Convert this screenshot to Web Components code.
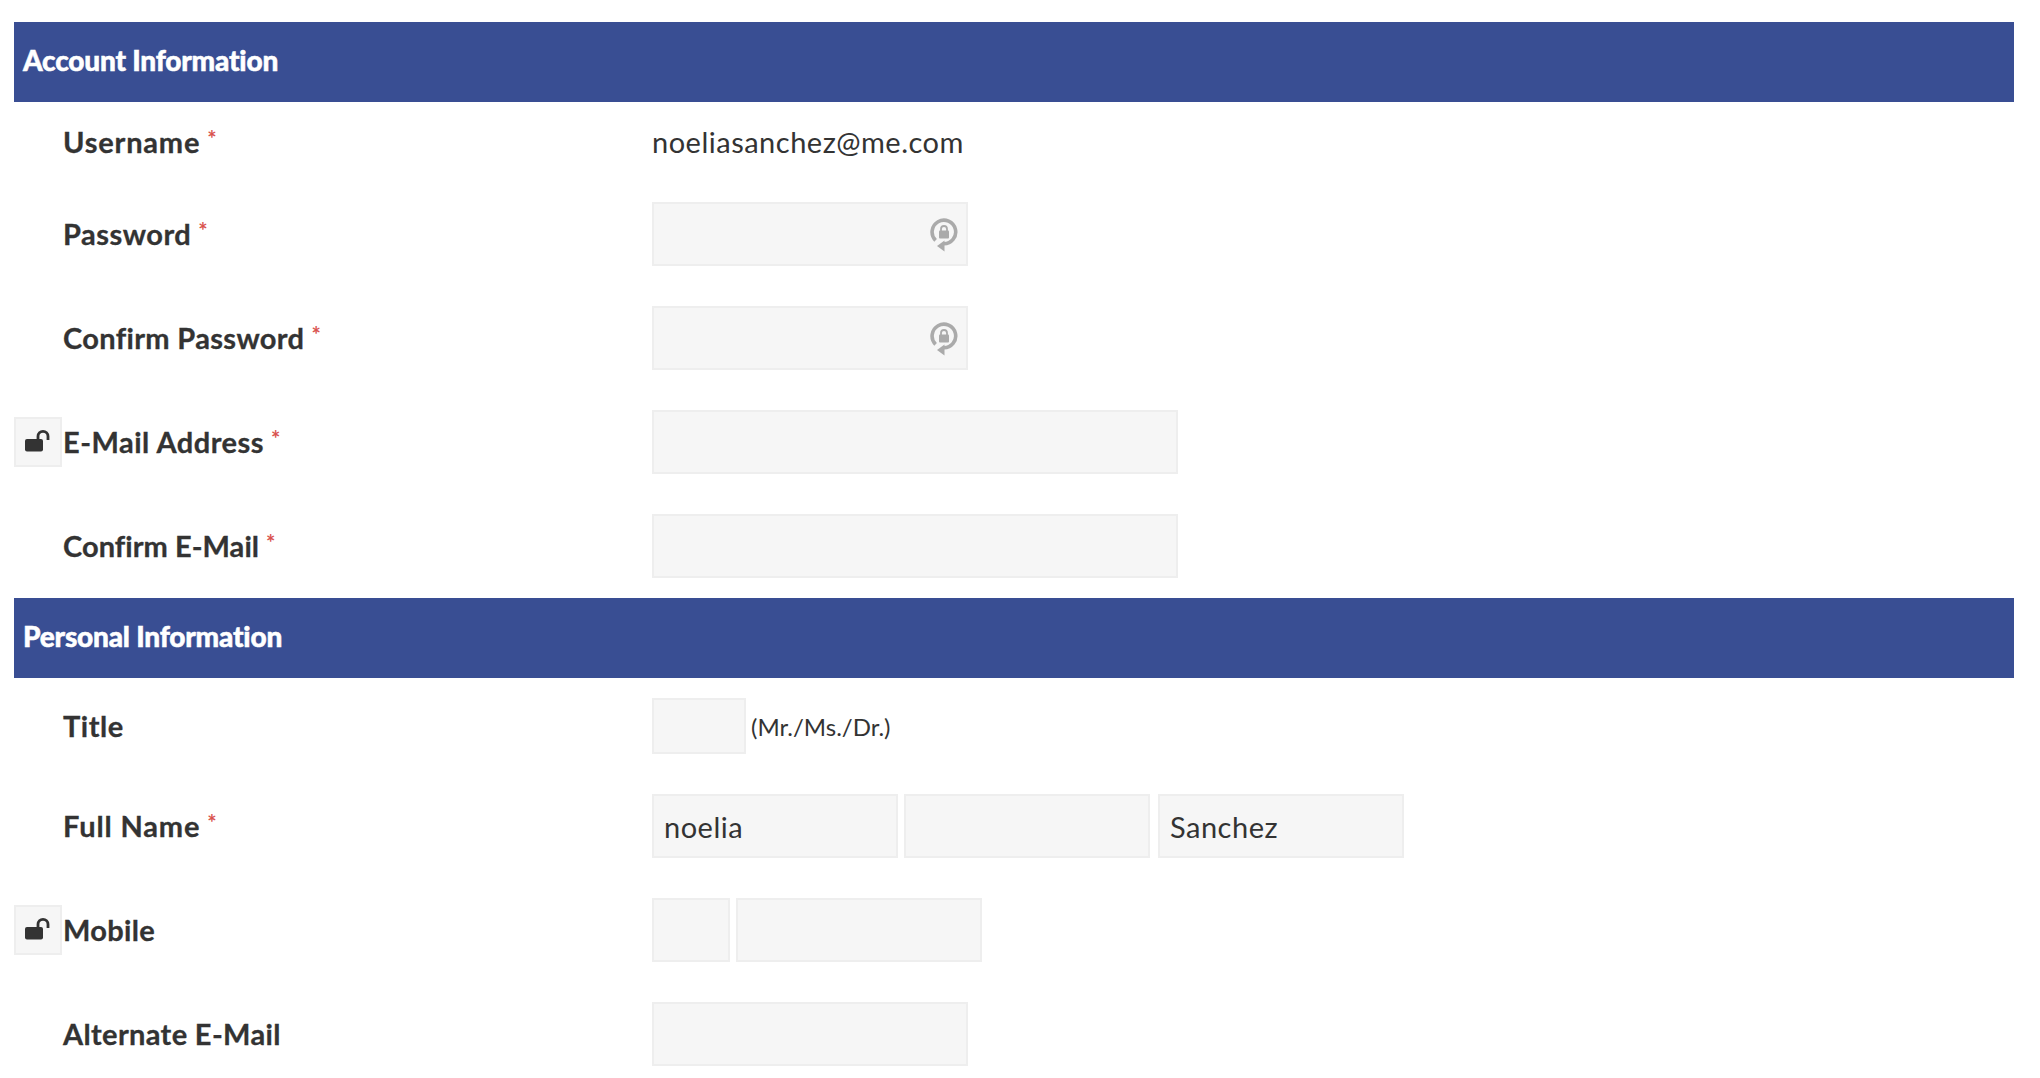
<!DOCTYPE html>
<html>
<head>
<meta charset="utf-8">
<title>Account form</title>
<style>
  html, body { margin: 0; padding: 0; background: #fff; overflow: hidden; }
  body { font-family: Lato, "Open Sans", sans-serif; color: #333; }
  .page { padding: 22px 26px 0 14px; }
</style>
</head>
<body>
<div class="page">
  <section-bar>Account Information</section-bar>
  <form-row label="Username" required short style="--track:.8px"><span>noeliasanchez@me.com</span></form-row>
  <form-row label="Password" required><text-box width="316" reset></text-box></form-row>
  <form-row label="Confirm Password" required style="--track:.35px"><text-box width="316" reset></text-box></form-row>
  <form-row label="E-Mail Address" required locked><text-box width="526"></text-box></form-row>
  <form-row label="Confirm E-Mail" required style="--track:.05px"><text-box width="526"></text-box></form-row>
  <section-bar>Personal Information</section-bar>
  <form-row label="Title"><text-box width="94" height="56"></text-box><span style="font-size:24px;margin-left:5px;letter-spacing:0">(Mr./Ms./Dr.)</span></form-row>
  <form-row label="Full Name" required style="--track:.85px">
    <text-box width="246">noelia</text-box><text-box width="246" style="margin-left:6px"></text-box><text-box width="246" style="margin-left:8px">Sanchez</text-box>
  </form-row>
  <form-row label="Mobile" locked style="--track:.3px"><text-box width="78"></text-box><text-box width="246" style="margin-left:6px"></text-box></form-row>
  <form-row label="Alternate E-Mail" style="--track:.35px"><text-box width="316"></text-box></form-row>
</div>

<script>
class SectionBar extends HTMLElement {
  constructor() {
    super();
    this.attachShadow({ mode: 'open' });
    this.shadowRoot.innerHTML = `
      <style>
        :host {
          display: flex;
          align-items: center;
          box-sizing: border-box;
          height: 80px;
          padding: 0 0 4px 9px;
          background: #394e93;
          color: #fff;
          font-size: 28px;
          font-weight: 900;
          letter-spacing: -.2px;
          -webkit-text-stroke: .5px #fff;
        }
      </style>
      <slot></slot>
    `;
  }
}

class LockToggle extends HTMLElement {
  constructor() {
    super();
    this.attachShadow({ mode: 'open' });
    this.shadowRoot.innerHTML = `
      <style>
        :host {
          display: flex;
          align-items: center;
          justify-content: center;
          box-sizing: border-box;
          width: 48px;
          height: 50px;
          background: #f6f6f6;
          border: 2px solid #eee;
        }
        svg { display: block; }
      </style>
      <svg width="28" height="26" viewBox="0 0 28 26">
        <rect x="1" y="10" width="18" height="12.500" rx="2" fill="#333"/>
        <path d="M14 12V7.300a5 5 0 0 1 10 0V11" fill="none" stroke="#333" stroke-width="2.800"/>
      </svg>
    `;
  }
}

class TextBox extends HTMLElement {
  constructor() {
    super();
    this.attachShadow({ mode: 'open' });
    this.shadowRoot.innerHTML = `
      <style>
        :host {
          display: flex;
          align-items: center;
          box-sizing: border-box;
          flex: none;
          width: var(--box-width, 316px);
          height: var(--box-height, 64px);
          padding: 0 10px;
          background: #f6f6f6;
          border: 2px solid #eee;
          font-size: 29px;
          letter-spacing: .5px;
          color: #333;
        }
        svg { display: none; margin: 1px -2px 0 auto; }
        :host([reset]) svg { display: block; }
      </style>
      <slot></slot>
      <svg width="28" height="34" viewBox="0 0 28 34">
        <path d="M5.600 22.400A11.800 11.800 0 1 1 13.500 25.800" fill="none" stroke="#aaa" stroke-width="3.600"/>
        <path d="M7 28L14.500 22.500V33.500Z" fill="#aaa"/>
        <rect x="9" y="12.500" width="10" height="8" rx="1" fill="#aaa"/>
        <path d="M11 13V11a3 3 0 0 1 6 0V13" fill="none" stroke="#aaa" stroke-width="1.800"/>
      </svg>
    `;
  }

  connectedCallback() {
    this.style.setProperty('--box-width', `${this.getAttribute('width') || 316}px`);
    this.style.setProperty('--box-height', `${this.getAttribute('height') || 64}px`);
  }
}

class FormRow extends HTMLElement {
  constructor() {
    super();
    this.attachShadow({ mode: 'open' });
    this.shadowRoot.innerHTML = `
      <style>
        :host {
          display: grid;
          grid-template-columns: 49px 589px 1fr;
          align-items: center;
          padding: 20px 0;
        }
        :host([short]) { height: 80px; padding: 0; }
        .label {
          margin-top: -2px;
          font-size: 29px;
          font-weight: 700;
          letter-spacing: var(--track, .5px);
          color: #333;
          white-space: nowrap;
          -webkit-text-stroke: .3px #333;
        }
        .star { color: #d9534f; font-size: 22px; font-weight: 700; margin-left: 7px; position: relative; top: -6px; -webkit-text-stroke: 0; }
        .field { display: flex; align-items: center; font-size: 29px; letter-spacing: .5px; }
        :host([short]) .field { margin-top: -2px; }
      </style>
      <div class="lock"></div>
      <div class="label"></div>
      <div class="field"><slot></slot></div>
    `;
  }

  connectedCallback() {
    const label = this.shadowRoot.querySelector('.label');
    label.textContent = this.getAttribute('label');
    if (this.hasAttribute('required')) {
      const star = document.createElement('span');
      star.className = 'star';
      star.textContent = '*';
      label.appendChild(star);
    }
    if (this.hasAttribute('locked')) {
      this.shadowRoot.querySelector('.lock').appendChild(document.createElement('lock-toggle'));
    }
  }
}

customElements.define('section-bar', SectionBar);
customElements.define('lock-toggle', LockToggle);
customElements.define('text-box', TextBox);
customElements.define('form-row', FormRow);
</script>
</body>
</html>
